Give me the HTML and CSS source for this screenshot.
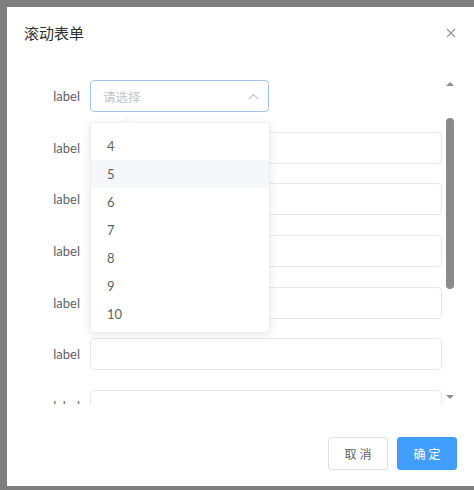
FILE: index.html
```html
<!DOCTYPE html>
<html lang="zh-CN">
<head>
<meta charset="utf-8">
<title>滚动表单</title>
<link rel="stylesheet" href="styles.css">
</head>
<body>
<div class="dialog">
  <div class="header">
    <span class="title">滚动表单</span>
    <svg class="close" width="10" height="10" viewBox="0 0 10 10"><path d="M1 1L9 9M9 1L1 9" stroke="#909399" stroke-width="1.1" fill="none"/></svg>
  </div>
  <div class="body">
    <div class="form">
      <div class="row">
        <span class="label">label</span>
        <div class="select">
          <span class="placeholder">请选择</span>
          <svg class="chev" width="11" height="7" viewBox="0 0 11 7"><path d="M1 6L5.5 1.5L10 6" stroke="#c0c4cc" stroke-width="1.2" fill="none"/></svg>
          <div class="dropdown">
            <span class="pop-arrow"></span>
            <div class="item">4</div>
            <div class="item hover">5</div>
            <div class="item">6</div>
            <div class="item">7</div>
            <div class="item">8</div>
            <div class="item">9</div>
            <div class="item">10</div>
          </div>
        </div>
      </div>
      <div class="row"><span class="label">label</span><div class="input"></div></div>
      <div class="row"><span class="label">label</span><div class="input"></div></div>
      <div class="row"><span class="label">label</span><div class="input"></div></div>
      <div class="row"><span class="label">label</span><div class="input"></div></div>
      <div class="row"><span class="label">label</span><div class="input"></div></div>
      <div class="row"><span class="label">label</span><div class="input"></div></div>
    </div>
    <div class="scrollbar">
      <div class="sb-btn"><span class="tri-up"></span></div>
      <div class="track"><div class="thumb"></div></div>
      <div class="sb-btn"><span class="tri-down"></span></div>
    </div>
  </div>
  <div class="footer">
    <button class="btn">取消</button>
    <button class="btn primary">确定</button>
  </div>
</div>
</body>
</html>
```
FILE: styles.css
```css
html, body {
  margin: 0;
  padding: 0;
}
body {
  background: #7e7e7e;
  height: 490px;
  overflow: hidden;
  font-family: Lato, "Noto Sans CJK SC", sans-serif;
}
.dialog {
  margin: 7px 0 0 7px;
  width: 467px;
  height: 479px;
  background: #fff;
  display: flex;
  flex-direction: column;
}
.header {
  height: 70px;
  box-sizing: border-box;
  padding: 16px 18px 0 17px;
  display: flex;
  justify-content: space-between;
  align-items: flex-start;
}
.title {
  font-family: "Noto Sans CJK SC", sans-serif;
  font-size: 15px;
  line-height: 20px;
  color: #303133;
}
.close {
  margin-top: 5px;
}
.body {
  height: 327px;
  display: flex;
  margin-right: 17px;
}
.form {
  flex: 1;
  overflow: hidden;
  padding-top: 3px;
}
.row {
  display: flex;
  align-items: center;
  height: 32px;
  margin-bottom: 19.67px;
}
.label {
  width: 73px;
  padding-right: 10px;
  text-align: right;
  font-size: 13px;
  color: #5f6266;
  flex-shrink: 0;
}
.input {
  flex: 1;
  height: 32px;
  box-sizing: border-box;
  border: 1px solid #e4e7ed;
  border-radius: 4px;
  margin-right: 1px;
}
.select {
  position: relative;
  width: 179px;
  height: 32px;
  box-sizing: border-box;
  border: 1px solid #a3c5e6;
  border-radius: 4px;
  display: flex;
  align-items: center;
  justify-content: space-between;
  padding: 0 9px 0 12px;
}
.placeholder {
  font-family: "Noto Sans CJK SC", sans-serif;
  font-size: 12.5px;
  color: #c0c4cc;
}
.dropdown {
  position: absolute;
  left: -1px;
  top: calc(100% + 11px);
  width: 180px;
  box-sizing: border-box;
  background: #fff;
  border: 1px solid #eceef2;
  border-radius: 4px;
  box-shadow: 0 2px 10px rgba(0, 0, 0, 0.09);
  padding: 9px 0 4px;
  z-index: 2;
}
.pop-arrow {
  position: absolute;
  top: -6px;
  left: 30px;
  width: 0;
  height: 0;
  border-left: 6px solid transparent;
  border-right: 6px solid transparent;
  border-bottom: 6px solid #f4f5f7;
}
.item {
  height: 28px;
  line-height: 29px;
  padding-left: 16px;
  font-size: 13px;
  color: #606266;
}
.item.hover {
  background: #f5f7fa;
}
.scrollbar {
  width: 14px;
  display: flex;
  flex-direction: column;
}
.sb-btn {
  height: 14px;
  display: flex;
  align-items: center;
  justify-content: center;
}
.tri-up {
  width: 0;
  height: 0;
  border-left: 4px solid transparent;
  border-right: 4px solid transparent;
  border-bottom: 4px solid #8f8f8f;
}
.tri-down {
  width: 0;
  height: 0;
  border-left: 4px solid transparent;
  border-right: 4px solid transparent;
  border-top: 4px solid #8f8f8f;
}
.track {
  flex: 1;
  display: flex;
  justify-content: center;
}
.thumb {
  margin-top: 27px;
  width: 8px;
  height: 171px;
  border-radius: 4px;
  background: #8b8b8b;
}
.footer {
  display: flex;
  justify-content: flex-end;
  gap: 9px;
  padding: 33px 17px 0;
}
.btn {
  width: 60px;
  height: 33px;
  box-sizing: border-box;
  border: 1px solid #dcdfe6;
  border-radius: 3px;
  background: #fff;
  color: #606266;
  font-family: "Noto Sans CJK SC", sans-serif;
  font-size: 12px;
  letter-spacing: 3px;
  padding: 0 0 0 3px;
}
.btn.primary {
  background: #409eff;
  border-color: #409eff;
  color: #fff;
}
```
